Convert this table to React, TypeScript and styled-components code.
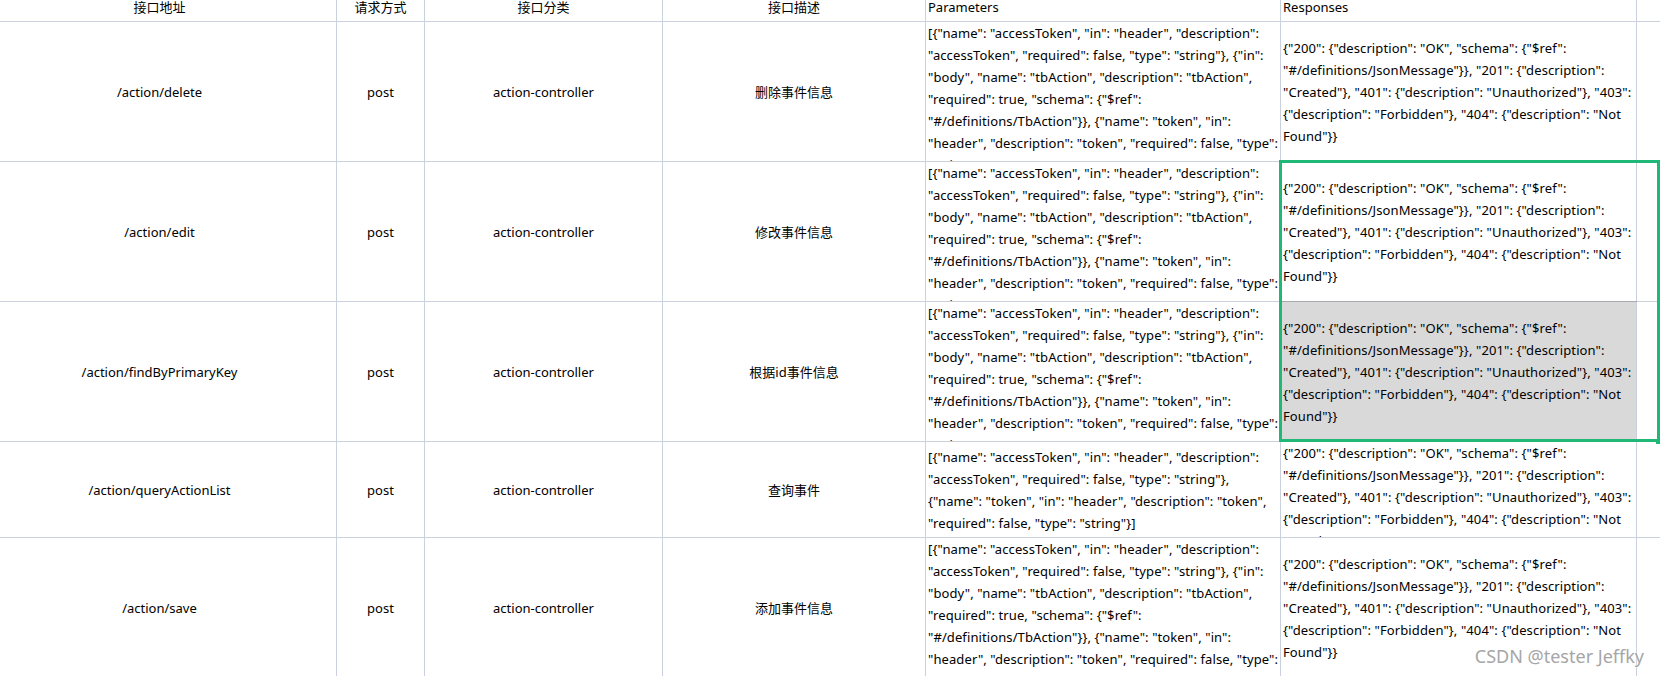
import React from "react";
import styled, { createGlobalStyle } from "styled-components";

const GlobalStyle = createGlobalStyle`
  html, body { margin: 0; padding: 0; background: #fff; }
  body { font-family: "Noto Sans", "Noto Sans CJK SC", sans-serif; }
`;

const LINE = 22;
const GRID = "#cbd0dd";

const Viewport = styled.div`
  position: relative;
  width: 1660px;
  height: 676px;
  overflow: hidden;
  background: #fff;
`;

const Sheet = styled.div`
  position: relative;
  display: grid;
  grid-template-columns: 354px 88px 238px 263px 355px 356px 1fr;
  grid-template-rows: 22px 140px 140px 140px 96px 140px;
  margin-left: -17px;
  width: 1677px;
  font-family: "Noto Sans", "Noto Sans CJK SC", sans-serif;
  font-size: 13px;
  color: #000;
`;

const HeaderCell = styled.div<{ $align: "center" | "left"; $filler?: boolean }>`
  box-sizing: border-box;
  border-right: ${(p) => (p.$filler ? "none" : `1px solid ${GRID}`)};
  border-bottom: 1px solid ${GRID};
  overflow: hidden;
  display: flex;
  align-items: center;
  justify-content: ${(p) => (p.$align === "center" ? "center" : "flex-start")};
  padding: 0 2px 8px;
  line-height: ${LINE}px;
  white-space: nowrap;
`;

const Cell = styled.div<{
  $align: "center" | "left";
  $valign: "center" | "start";
  $shaded?: boolean;
  $filler?: boolean;
}>`
  box-sizing: border-box;
  border-right: ${(p) => (p.$filler ? "none" : `1px solid ${GRID}`)};
  border-bottom: 1px solid ${GRID};
  overflow: hidden;
  display: flex;
  flex-direction: column;
  justify-content: ${(p) => (p.$valign === "start" ? "flex-start" : "center")};
  align-items: ${(p) => (p.$align === "center" ? "center" : "flex-start")};
  padding: 0 2px;
  line-height: ${LINE}px;
  letter-spacing: ${(p) => (p.$align === "left" ? "0.1px" : "0")};
  background: ${(p) => (p.$shaded ? "#d9d9d9" : "#fff")};
  box-shadow: ${(p) => (p.$shaded ? "0 -1px 0 #a7aaaf" : "none")};
`;

const Line = styled.span`
  display: block;
  white-space: nowrap;
`;

const SelectionFrame = styled.div`
  position: absolute;
  grid-column: 6;
  grid-row: 3 / 5;
  top: -2px;
  left: -2px;
  right: 0;
  bottom: 0;
  border: 3px solid #1fb877;
  pointer-events: none;
  z-index: 2;

  &::after {
    content: "";
    position: absolute;
    right: -4px;
    bottom: -5px;
    width: 5px;
    height: 5px;
    background: #1fb877;
  }
`;

const Watermark = styled.div`
  position: absolute;
  right: 16px;
  bottom: 8px;
  font-family: "Noto Sans", sans-serif;
  font-size: 18px;
  color: #a6a6a6;
  text-shadow: 0 0 2px #fff;
  white-space: nowrap;
  z-index: 3;
`;

const PARAMS_FULL = [
  `[{"name": "accessToken", "in": "header", "description":`,
  `"accessToken", "required": false, "type": "string"}, {"in":`,
  `"body", "name": "tbAction", "description": "tbAction",`,
  `"required": true, "schema": {"$ref":`,
  `"#/definitions/TbAction"}}, {"name": "token", "in":`,
  `"header", "description": "token", "required": false, "type":`,
  `"string"}]`,
];

const PARAMS_SHORT = [
  `[{"name": "accessToken", "in": "header", "description":`,
  `"accessToken", "required": false, "type": "string"},`,
  `{"name": "token", "in": "header", "description": "token",`,
  `"required": false, "type": "string"}]`,
];

const RESPONSES = [
  `{"200": {"description": "OK", "schema": {"$ref":`,
  `"#/definitions/JsonMessage"}}, "201": {"description":`,
  `"Created"}, "401": {"description": "Unauthorized"}, "403":`,
  `{"description": "Forbidden"}, "404": {"description": "Not`,
  `Found"}}`,
];

type Row = {
  path: string;
  method: string;
  group: string;
  desc: string;
  params: string[];
  height: number;
  shaded?: boolean;
};

const HEADERS: { label: string; align: "center" | "left" }[] = [
  { label: "接口地址", align: "center" },
  { label: "请求方式", align: "center" },
  { label: "接口分类", align: "center" },
  { label: "接口描述", align: "center" },
  { label: "Parameters", align: "left" },
  { label: "Responses", align: "left" },
];

const ROWS: Row[] = [
  { path: "/action/delete", method: "post", group: "action-controller", desc: "删除事件信息", params: PARAMS_FULL, height: 140 },
  { path: "/action/edit", method: "post", group: "action-controller", desc: "修改事件信息", params: PARAMS_FULL, height: 140 },
  { path: "/action/findByPrimaryKey", method: "post", group: "action-controller", desc: "根据id事件信息", params: PARAMS_FULL, height: 140, shaded: true },
  { path: "/action/queryActionList", method: "post", group: "action-controller", desc: "查询事件", params: PARAMS_SHORT, height: 96 },
  { path: "/action/save", method: "post", group: "action-controller", desc: "添加事件信息", params: PARAMS_FULL, height: 140 },
];

const valignFor = (lines: string[], height: number): "center" | "start" =>
  lines.length * LINE > height - 1 ? "start" : "center";

const TextCell = ({
  lines,
  height,
  shaded,
}: {
  lines: string[];
  height: number;
  shaded?: boolean;
}) => (
  <Cell $align="left" $valign={valignFor(lines, height)} $shaded={shaded}>
    {lines.map((l, i) => (
      <Line key={i}>{l}</Line>
    ))}
  </Cell>
);

export default function App() {
  return (
    <Viewport>
      <GlobalStyle />
      <Sheet>
        {HEADERS.map((h) => (
          <HeaderCell key={h.label} $align={h.align}>
            {h.label}
          </HeaderCell>
        ))}
        <HeaderCell $align="center" $filler />
        {ROWS.map((r) => (
          <React.Fragment key={r.path}>
            <Cell $align="center" $valign="center">{r.path}</Cell>
            <Cell $align="center" $valign="center">{r.method}</Cell>
            <Cell $align="center" $valign="center">{r.group}</Cell>
            <Cell $align="center" $valign="center">{r.desc}</Cell>
            <TextCell lines={r.params} height={r.height} />
            <TextCell lines={RESPONSES} height={r.height} shaded={r.shaded} />
            <Cell $align="center" $valign="center" $filler />
          </React.Fragment>
        ))}
        <SelectionFrame />
      </Sheet>
      <Watermark>CSDN @tester Jeffky</Watermark>
    </Viewport>
  );
}
